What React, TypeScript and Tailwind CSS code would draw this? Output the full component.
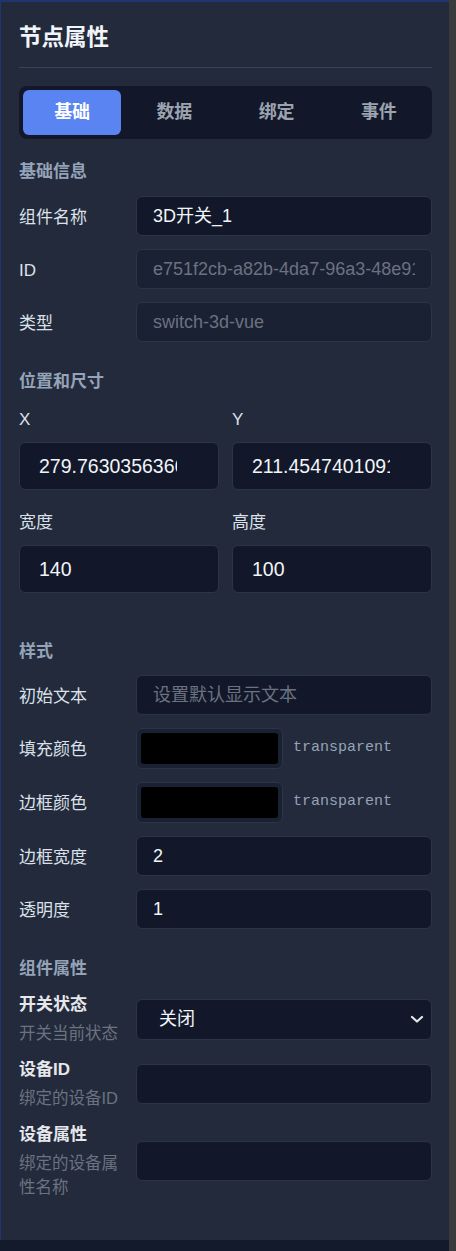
import { ReactNode } from "react";

const font = { fontFamily: '"Liberation Sans", "Noto Sans CJK SC", sans-serif' };

function Heading({ children, className = "" }: { children: ReactNode; className?: string }) {
  return <div className={`pt-[2px] text-[17px] leading-6 font-bold text-[#94a3b8] ${className}`}>{children}</div>;
}

function Field({ value, placeholder, disabled }: { value?: string; placeholder?: string; disabled?: boolean }) {
  return (
    <div
      className={`min-w-0 h-10 px-4 rounded-md border border-[#2c3546] text-[18px] leading-[38px] ${
        disabled ? "bg-[#1a2133] text-[#6b7280]" : "bg-[#121829] text-[#f1f5f9]"
      }`}
    >
      <div className="overflow-hidden whitespace-nowrap">
        {value ? value : <span className="text-[#6b7280]">{placeholder}</span>}
      </div>
    </div>
  );
}

function Row({ label, children }: { label: string; children: ReactNode }) {
  return (
    <div className="grid grid-cols-[105px_minmax(0,1fr)] gap-3 items-center">
      <div className="pt-[3px] text-[17px] leading-6 text-[#dbe1ea]">{label}</div>
      {children}
    </div>
  );
}

function ColorRow({ label }: { label: string }) {
  return (
    <Row label={label}>
      <div className="flex items-center gap-[10px]">
        <div className="w-[147px] h-[41px] p-1 rounded-md border border-[#2c3546] bg-[#1a2133]">
          <div className="w-full h-full bg-black rounded-[3px]" />
        </div>
        <span className="text-[15px] text-[#94a3b8]" style={{ fontFamily: '"Liberation Mono", monospace' }}>
          transparent
        </span>
      </div>
    </Row>
  );
}

function NumBox({ value }: { value: string }) {
  return (
    <div className="min-w-0 h-12 pl-[19px] pr-[41px] rounded-md border border-[#2c3546] bg-[#121829] text-[19.5px] leading-[46px] text-[#f1f5f9]">
      <div className="overflow-hidden whitespace-nowrap">{value}</div>
    </div>
  );
}

function PropRow({ label, sub, children }: { label: string; sub: string; children: ReactNode }) {
  return (
    <div className="grid grid-cols-[105px_minmax(0,1fr)] gap-3 items-center">
      <div>
        <div className="text-[17px] leading-6 font-bold text-[#e5e7eb]">{label}</div>
        <div className="mt-1 text-[16.5px] leading-6 text-[#6b7280]">{sub}</div>
      </div>
      {children}
    </div>
  );
}

export default function App() {
  const tabs = ["基础", "数据", "绑定", "事件"];
  return (
    <div className="h-[1251px] flex bg-[#131a2b]" style={font}>
      <div className="flex-1 min-w-0 flex flex-col">
        <div className="bg-[#232a3b] border-t-2 border-l border-[#1f3470] pl-[18px] pr-[17px] pt-[21px] pb-[41px]">
          <div className="text-[22.5px] leading-[30px] font-bold text-[#f1f5f9] pb-[14px] border-b border-[#3a4456]">
            节点属性
          </div>

          <div className="mt-[18px] grid grid-cols-4 gap-1 p-1 rounded-lg bg-[#121829]">
            {tabs.map((t, i) => (
              <div
                key={t}
                className={`h-[45px] flex items-center justify-center rounded-md text-[18px] font-semibold ${
                  i === 0 ? "bg-[#5a84f1] text-white" : "text-[#9ca3af]"
                }`}
              >
                {t}
              </div>
            ))}
          </div>

          <Heading className="mt-[19px] mb-3">基础信息</Heading>
          <div className="flex flex-col gap-[13px]">
            <Row label="组件名称">
              <Field value="3D开关_1" />
            </Row>
            <Row label="ID">
              <Field value="e751f2cb-a82b-4da7-96a3-48e91c0d7b2a" disabled />
            </Row>
            <Row label="类型">
              <Field value="switch-3d-vue" disabled />
            </Row>
          </div>

          <Heading className="mt-[26px] mb-[14px]">位置和尺寸</Heading>
          <div className="grid grid-cols-2 gap-x-[13px]">
            <div className="min-w-0">
              <div className="text-[17px] leading-6 text-[#dbe1ea] mb-[10px]">X</div>
              <NumBox value="279.76303563668" />
            </div>
            <div className="min-w-0">
              <div className="text-[17px] leading-6 text-[#dbe1ea] mb-[10px]">Y</div>
              <NumBox value="211.45474010918" />
            </div>
            <div className="min-w-0 mt-[21px]">
              <div className="text-[17px] leading-6 text-[#dbe1ea] mb-[10px]">宽度</div>
              <NumBox value="140" />
            </div>
            <div className="min-w-0 mt-[21px]">
              <div className="text-[17px] leading-6 text-[#dbe1ea] mb-[10px]">高度</div>
              <NumBox value="100" />
            </div>
          </div>

          <Heading className="mt-[45px] mb-[11px]">样式</Heading>
          <div className="flex flex-col gap-[13px]">
            <Row label="初始文本">
              <Field placeholder="设置默认显示文本" />
            </Row>
            <ColorRow label="填充颜色" />
            <ColorRow label="边框颜色" />
            <Row label="边框宽度">
              <Field value="2" />
            </Row>
            <Row label="透明度">
              <Field value="1" />
            </Row>
          </div>

          <Heading className="mt-[26px] mb-3">组件属性</Heading>
          <div className="flex flex-col gap-[13px]">
            <PropRow label="开关状态" sub="开关当前状态">
              <div className="h-[41px] flex items-center justify-between pl-[22px] pr-[6px] rounded-md border border-[#2c3546] bg-[#121829] text-[18px] text-[#f1f5f9]">
                <span>关闭</span>
                <svg width="16" height="16" viewBox="0 0 16 16" fill="none">
                  <path d="M3 6l5 4.5L13 6" stroke="#e5e7eb" strokeWidth="2.2" strokeLinecap="round" strokeLinejoin="round" />
                </svg>
              </div>
            </PropRow>
            <PropRow label="设备ID" sub="绑定的设备ID">
              <Field />
            </PropRow>
            <PropRow label="设备属性" sub="绑定的设备属性名称">
              <Field />
            </PropRow>
          </div>
        </div>
        <div className="flex-1 bg-[#131a2b]" />
      </div>
      <div className="w-[7px] bg-[#3b3b3b]" />
    </div>
  );
}
